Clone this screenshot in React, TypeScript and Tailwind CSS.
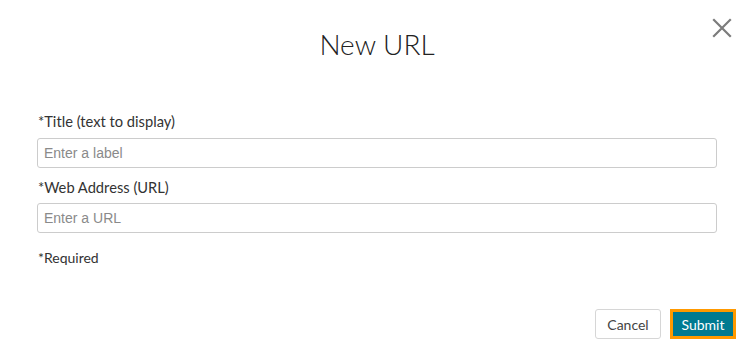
export default function App() {
  return (
    <div className="w-[754px] h-[358px] bg-white relative font-['Lato',sans-serif] text-[#333]">
      <button className="absolute left-[712px] top-[18px] text-[#7c7c7c]" aria-label="Close">
        <svg width="20" height="20" viewBox="0 0 20 20" fill="none" stroke="currentColor" strokeWidth="2.2" strokeLinecap="square">
          <path d="M2 2 L18 18 M18 2 L2 18" />
        </svg>
      </button>

      <div className="pt-[24px] text-center">
        <h2 className="text-[28px] font-light text-[#222] leading-[40px]">New URL</h2>
      </div>

      <div className="px-[37px] pt-[48px] w-[754px]">
        <label className="block text-[14.7px] leading-[18px] text-[#333] mb-[8px] pl-[1px]">*Title (text to display)</label>
        <input
          placeholder="Enter a label"
          className="block w-[680px] h-[30px] border border-[#ccc] rounded-[3px] px-[6px] text-[14px] font-['Liberation_Sans',sans-serif] placeholder:text-[#8a8a8a] outline-none"
        />
        <label className="block text-[14.7px] leading-[18px] text-[#333] mt-[10px] mb-[7px] pl-[1px]">*Web Address (URL)</label>
        <input
          placeholder="Enter a URL"
          className="block w-[680px] h-[30px] border border-[#ccc] rounded-[3px] px-[6px] text-[14px] font-['Liberation_Sans',sans-serif] placeholder:text-[#8a8a8a] outline-none"
        />
        <p className="text-[14px] leading-[16px] mt-[17px] pl-[1px]">*Required</p>
      </div>

      <div className="flex justify-end gap-[9px] pr-[18px] mt-[43px]">
        <button className="w-[66px] h-[30px] border border-[#d6d6d6] rounded-[3px] bg-white text-[14px] text-[#444]">
          Cancel
        </button>
        <button className="w-[66px] h-[30px] bg-[#007a91] border-[3px] border-[#ff9900] text-white text-[14px]">
          Submit
        </button>
      </div>
    </div>
  );
}
